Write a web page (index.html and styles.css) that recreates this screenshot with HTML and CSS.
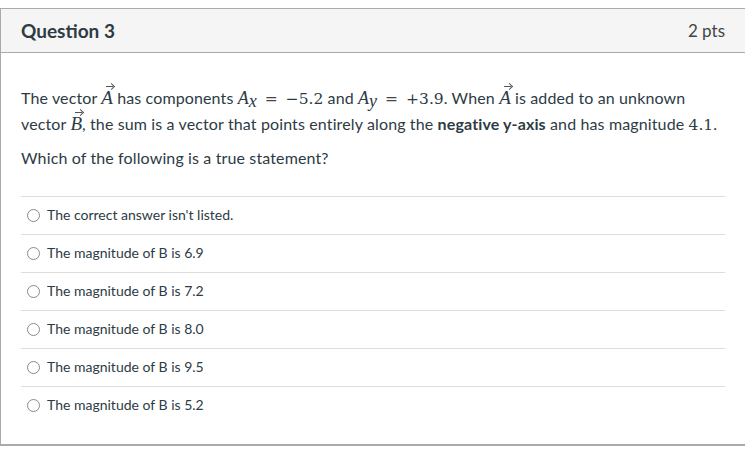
FILE: index.html
```html
<!DOCTYPE html>
<html>
<head>
<meta charset="utf-8">
<link rel="stylesheet" href="styles.css">
</head>
<body>
<div class="card">
  <div class="card-header">
    <span class="title">Question 3</span>
    <span class="pts">2 pts</span>
  </div>
  <div class="card-body">
    <p class="stem">The vector <span class="vec">A</span> has components <span class="m"><i>A</i><sub><i>x</i></sub><span class="op">=</span>−5.2</span> and <span class="m"><i>A</i><sub><i>y</i></sub><span class="op">=</span>+3.9</span>. When <span class="vec">A</span> is added to an unknown vector <span class="vec">B</span>, the sum is a vector that points entirely along the <strong>negative y-axis</strong> and has magnitude <span class="m">4.1</span>.</p>
    <p class="stem second">Which of the following is a true statement?</p>
    <div class="answers">
      <label class="answer"><span class="radio"></span><span class="atext">The correct answer isn't listed.</span></label>
      <label class="answer"><span class="radio"></span><span class="atext">The magnitude of B is 6.9</span></label>
      <label class="answer"><span class="radio"></span><span class="atext">The magnitude of B is 7.2</span></label>
      <label class="answer"><span class="radio"></span><span class="atext">The magnitude of B is 8.0</span></label>
      <label class="answer"><span class="radio"></span><span class="atext">The magnitude of B is 9.5</span></label>
      <label class="answer"><span class="radio"></span><span class="atext">The magnitude of B is 5.2</span></label>
    </div>
  </div>
</div>
</body>
</html>
```

FILE: styles.css
```css
html, body {
  margin: 0;
  padding: 0;
  background: #fff;
}
body {
  font-family: Lato, "Liberation Sans", sans-serif;
  color: #2d3b45;
}
.card {
  margin-top: 8px;
  border: 1px solid #aaaaaa;
  border-right: none;
  border-bottom-width: 2px;
}
.card-header {
  background: #f5f5f5;
  border-bottom: 1px solid #aaaaaa;
  display: flex;
  align-items: center;
  justify-content: space-between;
  padding: 0 20px 1px 20px;
  box-sizing: border-box;
  height: 44px;
}
.title {
  font-size: 19px;
  font-weight: 700;
  color: #2d3b45;
}
.pts {
  font-size: 17px;
  font-weight: 400;
  color: #444;
}
.card-body {
  padding: 32px 20px 20px 20px;
}
.stem {
  margin: 0;
  font-size: 16px;
  line-height: 26px;
  letter-spacing: 0.13px;
}
.stem.second {
  margin-top: 8px;
  margin-bottom: 25px;
}
.stem strong {
  font-weight: 700;
}
.m {
  font-family: "DejaVu Serif", "Liberation Serif", serif;
  font-size: 15.5px;
  line-height: 1;
  letter-spacing: 0;
}
.m i {
  font-family: "Liberation Serif", serif;
  font-size: 18px;
}
.m sub {
  font-size: 10px;
  vertical-align: -3px;
  line-height: 1;
}
.op {
  color: #444;
  margin: 0 8px;
}
.vec {
  font-family: "Liberation Serif", serif;
  font-style: italic;
  font-size: 19px;
  position: relative;
  display: inline-block;
  line-height: 16px;
  letter-spacing: 0;
}
.vec::before {
  content: "";
  position: absolute;
  left: 5px;
  right: 0;
  top: -4px;
  height: 1px;
  background: #555;
}
.vec::after {
  content: "";
  position: absolute;
  right: -1px;
  top: -6px;
  width: 4px;
  height: 4px;
  border-top: 1px solid #555;
  border-right: 1px solid #555;
  transform: rotate(45deg);
}
.answers {
  display: flex;
  flex-direction: column;
}
.answer {
  display: flex;
  align-items: center;
  height: 37px;
  box-sizing: content-box;
  border-top: 1px solid #dddddd;
  padding-left: 6px;
  font-size: 14px;
  color: #2d3b45;
}
.atext {
  margin-top: -3px;
}
.radio {
  width: 11px;
  height: 11px;
  border: 1px solid #8a8a8a;
  border-radius: 50%;
  margin-right: 7px;
  margin-top: -1px;
  flex: none;
}
```
